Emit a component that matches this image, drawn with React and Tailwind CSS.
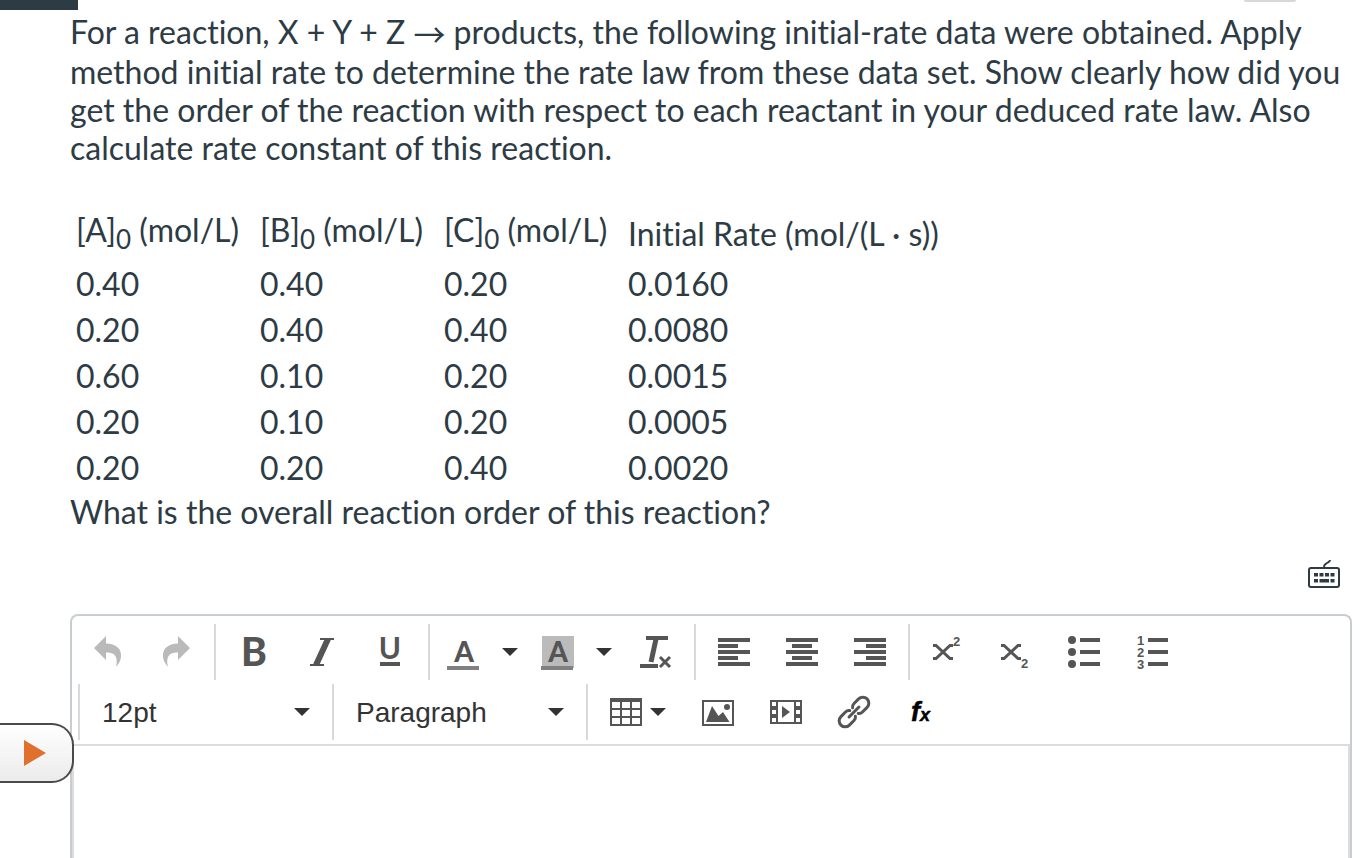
import React, { useState } from "react";

const rates = [
  ["0.40", "0.40", "0.20", "0.0160"],
  ["0.20", "0.40", "0.40", "0.0080"],
  ["0.60", "0.10", "0.20", "0.0015"],
  ["0.20", "0.10", "0.20", "0.0005"],
  ["0.20", "0.20", "0.40", "0.0020"],
];

const Icon = ({ children }) => (
  <svg
    viewBox="0 0 32 32"
    className="w-8 h-8 shrink-0 overflow-visible"
    fill="currentColor"
    aria-hidden="true"
  >
    {children}
  </svg>
);

const Caret = () => (
  <svg viewBox="0 0 16 8" className="w-4 h-2 shrink-0 text-[#333333]" aria-hidden="true">
    <path d="M0 0h16L8 8z" fill="currentColor" />
  </svg>
);

const ToolButton = ({ label, children, ...rest }) => (
  <button
    type="button"
    aria-label={label}
    title={label}
    className="w-[68px] h-14 flex items-center justify-center disabled:text-[#bababa]"
    {...rest}
  >
    <Icon>{children}</Icon>
  </button>
);

const ColorButton = ({ label, children }) => (
  <button
    type="button"
    aria-label={label}
    title={label}
    className="w-[94px] h-14 flex items-center pl-[13px] gap-[23px]"
  >
    <Icon>{children}</Icon>
    <Caret />
  </button>
);

const Group = ({ children }) => (
  <div className="flex h-14 px-1 border-l-2 border-[#d9d9d9]">{children}</div>
);

const ToolSelect = ({ label, options }) => (
  <div className="relative flex items-center w-[254px] h-14 border-l-2 border-[#d9d9d9]">
    <select
      aria-label={label}
      className="appearance-none w-full h-full pt-0.5 pl-[22px] pr-12 bg-transparent text-[28px] text-[#333333] outline-none"
    >
      {options.map((option) => (
        <option key={option}>{option}</option>
      ))}
    </select>
    <span className="absolute right-[22px] pointer-events-none">
      <Caret />
    </span>
  </div>
);

const AlignBars = ({ x }) => (
  <>
    <path d="M0 2h32v4H0zM0 14h32v4H0zM0 26h32v4H0z" />
    <rect x={x} y="8" width="20" height="4" />
    <rect x={x} y="20" width="20" height="4" />
  </>
);

const ScriptCross = () => (
  <path
    d="M1 9.500h3L18 22.500h3M21 9.500h-3L4 22.500H1"
    fill="none"
    stroke="currentColor"
    strokeWidth="3"
  />
);

const undoPath =
  "M14 0L2 12l12 12v-7.500c9-.5 12.500 4.500 10 14.500 3.500-4 5.500-8 5-12.500C28.500 11.500 22.500 7.500 14 7.500z";

const Toolbar = () => (
  <div className="pt-2 pb-1 flex flex-col gap-1 border-b-2 border-[#dddddd] text-[#555555] font-['Liberation_Sans',sans-serif]">
    <div className="flex flex-wrap">
      <div className="flex pl-0.5 pr-1">
        <ToolButton label="Undo" disabled>
          <path d={undoPath} />
        </ToolButton>
        <ToolButton label="Redo" disabled>
          <path d={undoPath} transform="matrix(-1 0 0 1 32 0)" />
        </ToolButton>
      </div>

      <Group>
        <ToolButton label="Bold">
          <text x="16" y="30" textAnchor="middle" className="font-['Lato',sans-serif] font-black text-[39px]">
            B
          </text>
        </ToolButton>
        <ToolButton label="Italic">
          <path d="M14 2h14v2H14zM4 28h14v2H4z" />
          <line x1="22" y1="3" x2="10" y2="29" stroke="currentColor" strokeWidth="6" />
        </ToolButton>
        <ToolButton label="Underline">
          <text x="16" y="23" textAnchor="middle" className="font-['Lato',sans-serif] font-bold text-[30px]">
            U
          </text>
          <rect x="6" y="26" width="20" height="4" />
        </ToolButton>
      </Group>

      <Group>
        <ColorButton label="Text color">
          <text x="17" y="26" textAnchor="middle" className="font-['Lato',sans-serif] font-black text-[28px]">
            A
          </text>
          <rect y="30" width="32" height="4" fill="#808080" />
        </ColorButton>
        <ColorButton label="Background color">
          <rect x="1" width="32" height="32" fill="#bbbbbb" />
          <text x="17" y="26" textAnchor="middle" className="font-['Lato',sans-serif] font-black text-[28px]">
            A
          </text>
          <rect y="30" width="32" height="4" fill="#808080" />
        </ColorButton>
        <ToolButton label="Clear formatting">
          <path d="M6 0h22v4H6zM0 28h18v4H0z" />
          <g stroke="currentColor" fill="none">
            <line x1="16" y1="3" x2="11" y2="26" strokeWidth="5" />
            <path d="M20 21l10 10M30 21L20 31" strokeWidth="3" />
          </g>
        </ToolButton>
      </Group>

      <Group>
        <ToolButton label="Align left">
          <AlignBars x={0} />
        </ToolButton>
        <ToolButton label="Align center">
          <AlignBars x={6} />
        </ToolButton>
        <ToolButton label="Align right">
          <AlignBars x={12} />
        </ToolButton>
      </Group>

      <Group>
        <ToolButton label="Superscript">
          <ScriptCross />
          <text x="21" y="10" className="font-bold text-[13px]">2</text>
        </ToolButton>
        <ToolButton label="Subscript">
          <ScriptCross />
          <text x="21" y="32" className="font-bold text-[13px]">2</text>
        </ToolButton>
        <ToolButton label="Bulleted list">
          <circle cx="4" cy="4" r="4" />
          <circle cx="4" cy="16" r="4" />
          <circle cx="4" cy="28" r="4" />
          <path d="M12 2h20v4H12zM12 14h20v4H12zM12 26h20v4H12z" />
        </ToolButton>
        <ToolButton label="Numbered list">
          <g className="font-bold text-[13px]">
            <text x="1" y="9">1</text>
            <text x="1" y="21">2</text>
            <text x="1" y="33">3</text>
          </g>
          <path d="M12 2h20v4H12zM12 14h20v4H12zM12 26h20v4H12z" />
        </ToolButton>
      </Group>
    </div>

    <div className="flex flex-wrap pl-1.5">
      <ToolSelect label="Font size" options={["12pt", "14pt", "18pt", "24pt", "36pt"]} />
      <ToolSelect label="Block format" options={["Paragraph", "Heading 2", "Heading 3", "Preformatted"]} />

      <Group>
        <button
          type="button"
          aria-label="Table"
          title="Table"
          className="w-[92px] h-14 flex items-center pl-[18px] gap-2"
        >
          <Icon>
            <path d="M0 2h32v4H0zM0 12h32v2H0zM0 20h32v2H0zM0 28h32v2H0zM0 2h2v28H0zM10 2h2v28h-2zM20 2h2v28h-2zM30 2h2v28h-2z" />
          </Icon>
          <Caret />
        </button>
        <ToolButton label="Image">
          <rect x="1" y="5" width="30" height="24" fill="none" stroke="currentColor" strokeWidth="2" />
          <path d="M4 26L10 10l6.500 10 4.500-4 6.500 10z" />
          <circle cx="25" cy="11" r="3" />
        </ToolButton>
        <ToolButton label="Media">
          <path
            fillRule="evenodd"
            d="M0 4h32v24H0zM8 6v20h16V6zM2 6v4h4V6zM2 14v4h4v-4zM2 22v4h4v-4zM26 6v4h4V6zM26 14v4h4v-4zM26 22v4h4v-4z"
          />
          <path d="M12 10l8 6-8 6z" />
        </ToolButton>
        <ToolButton label="Link">
          <g
            transform="translate(16 16) rotate(-45)"
            fill="none"
            stroke="currentColor"
            strokeWidth="3"
            strokeLinecap="round"
          >
            <path d="M-7 0H7" />
            <path d="M-2 -4C-3 -5.500 -4.500 -6 -6 -6H-12.500a6 6 0 0 0 0 12H-6C-4.500 6 -3 5.500 -2 4" />
            <path d="M2 -4C3 -5.500 4.500 -6 6 -6H12.500a6 6 0 0 1 0 12H6C4.500 6 3 5.500 2 4" />
          </g>
        </ToolButton>
        <ToolButton label="Equation">
          <g className="font-bold italic" fill="#000000" stroke="#000000" strokeWidth="0.5">
            <text x="5" y="25" className="text-[27px]">f</text>
            <text x="14" y="25" className="text-[18px]">x</text>
          </g>
        </ToolButton>
      </Group>
    </div>
  </div>
);

const App = () => {
  const [answer, setAnswer] = useState("");

  return (
    <div className="relative min-h-screen flex flex-col pl-[70px] pr-3 pt-[13px] bg-white text-[#2d3b45] text-[32px] leading-[38px] font-['Lato',sans-serif] [font-variant-ligatures:none] [text-rendering:optimizeLegibility]">
      {/* Edges of the page header */}
      <div className="absolute top-0 left-0 w-[78px] h-[10px] bg-[#2d3b45]" />
      <div className="absolute top-0 right-[68px] w-[52px] h-0.5 rounded-b-lg bg-[#d8d8d8]" />

      {/* Question */}
      <p>
        For a reaction, X + Y + Z{" "}
        <span className="inline-block align-top font-['Noto_Sans_CJK_JP',sans-serif] leading-[40px]">→</span>{" "}
        products, the following initial-rate data were obtained. Apply method
        initial rate to determine the rate law from these data set. Show clearly
        how did you get the order of the reaction with respect to each reactant
        in your deduced rate law. Also calculate rate constant of this reaction.
      </p>

      <table className="mt-10 self-start text-left">
        <thead>
          <tr className="h-[54px]">
            {["A", "B", "C"].map((name) => (
              <th key={name} className="min-w-[184px] pl-1.5 py-1 font-normal whitespace-nowrap">
                [{name}]<sub className="static align-sub text-[26px] leading-[36px]">0</sub> (mol/L)
              </th>
            ))}
            <th className="pl-1.5 py-1 font-normal whitespace-nowrap">
              Initial Rate (mol/(L · s))
            </th>
          </tr>
        </thead>
        <tbody>
          {rates.map((row, i) => (
            <tr key={i}>
              {row.map((value, j) => (
                <td key={j} className="pl-1.5 py-1">
                  {value}
                </td>
              ))}
            </tr>
          ))}
        </tbody>
      </table>

      <p className="mt-0.5">What is the overall reaction order of this reaction?</p>

      <div className="flex justify-end pr-3 mt-7 mb-6">
        <button type="button" aria-label="Keyboard shortcuts">
          <svg viewBox="0 0 32 31" className="block w-8 h-[31px]" fill="currentColor" aria-hidden="true">
            <rect x="1" y="9" width="30" height="19" rx="2" fill="none" stroke="currentColor" strokeWidth="2" />
            <path d="M16 8c0-3 1.500-3 3-4s3-1 3-3" fill="none" stroke="currentColor" strokeWidth="2" />
            <path d="M6 14h4v3.500H6zM11.500 14h4v3.500h-4zM17 14h4v3.500h-4zM22.500 14h4v3.500h-4zM6 20h4v3.500H6zM11.500 20h9.500v3.500h-9.500zM22.500 20h4v3.500h-4z" />
          </svg>
        </button>
      </div>

      {/* Editor */}
      <div className="grow flex flex-col border-2 border-b-0 border-[#c7cdd1] rounded-t-lg">
        <Toolbar />
        <textarea
          aria-label="Answer"
          value={answer}
          onChange={(e) => setAnswer(e.target.value)}
          className="grow w-full px-4 py-3 border-x-2 border-[#dddddd] resize-none outline-none"
        />
      </div>

      {/* Side tab */}
      <button
        type="button"
        aria-label="Expand panel"
        className="absolute left-0 top-[723px] w-[74px] h-[60px] pl-6 border-2 border-l-0 border-[#4a4a4a] rounded-r-[22px] bg-linear-to-b from-white to-[#ebebeb]"
      >
        <svg viewBox="0 0 22 26" className="block w-[22px] h-[26px]" aria-hidden="true">
          <path d="M0 0l22 13L0 26z" fill="#e0702d" />
        </svg>
      </button>
    </div>
  );
};

export default App;
